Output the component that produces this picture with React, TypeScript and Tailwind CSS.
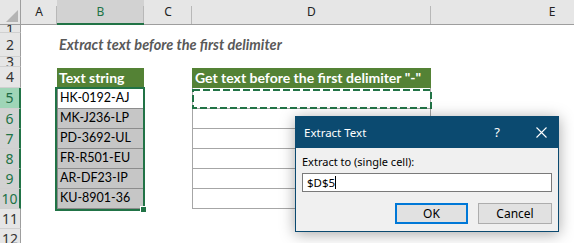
import React from 'react';

const cols = ['A', 'B', 'C', 'D', 'E'];
const rowNums = [1, 2, 3, 4, 5, 6, 7, 8, 9, 10, 11, 12];

const values: Record<number, string> = {
  5: 'HK-0192-AJ',
  6: 'MK-J236-LP',
  7: 'PD-3692-UL',
  8: 'FR-R501-EU',
  9: 'AR-DF23-IP',
  10: 'KU-8901-36',
};

const ColHeader = ({ label }: { label: string }) => {
  const selected = label === 'B';
  return (
    <div
      className={`relative flex items-center justify-center text-[12px] ${
        selected
          ? 'bg-[#d2d2d2] text-[#217346] border-b-2 border-[#217346]'
          : 'bg-[#e6e6e6] text-[#222] border-b border-[#9e9e9e]'
      }`}
    >
      {label}
      <div className="absolute right-0 top-[6px] bottom-0 w-px bg-[#b8b8b8]" />
    </div>
  );
};

const RowHeader = ({ n }: { n: number }) => {
  const active = n === 5;
  const sel = n >= 5 && n <= 10;
  return (
    <div
      className={`flex items-center justify-center overflow-hidden border-b border-[#d0d0d0] text-[14px] leading-none ${
        active
          ? 'bg-[#9fd5b7] text-[#1e6b45] border-r-2 border-r-[#217346]'
          : sel
          ? 'bg-[#d2d2d2] text-[#217346] border-r-2 border-r-[#217346]'
          : 'bg-[#e6e6e6] text-[#333] border-r border-r-[#9e9e9e]'
      }`}
    >
      {n}
    </div>
  );
};

function Row({ n }: { n: number }) {
  let b: React.ReactNode = <div />;
  let d: React.ReactNode = <div />;

  if (n === 2) {
    b = (
      <div className="flex items-center pl-[2px] whitespace-nowrap font-['Lato'] text-[14.5px] font-bold italic text-[#595959]">
        Extract text before the first delimiter
      </div>
    );
  }
  if (n === 4) {
    b = (
      <div className="flex items-center mt-[1px] pl-[2px] bg-[#548235] text-white font-['Lato'] font-bold text-[14px] leading-none whitespace-nowrap">
        Text string
      </div>
    );
    d = (
      <div className="flex items-center mt-[1px] pl-[3px] bg-[#548235] text-white font-['Lato'] font-bold text-[14px] leading-none whitespace-nowrap">
        Get text before the first delimiter "-"
      </div>
    );
  }
  if (values[n]) {
    b = (
      <div
        className={`flex items-center pl-[2px] border-b border-x border-[#8c8c8c] font-['Lato'] text-[12.5px] leading-none text-black whitespace-nowrap overflow-hidden ${
          n > 5 ? 'bg-[#c6c6c6]' : 'bg-white'
        }`}
      >
        {values[n]}
      </div>
    );
    d = <div className="border-b border-x border-[#a6a6a6] bg-white" />;
  }

  return (
    <>
      <RowHeader n={n} />
      <div />
      {b}
      <div />
      {d}
      <div />
    </>
  );
}

const Dialog = () => (
  <div className="absolute left-[295px] top-[116px] w-[264px] h-[116px] flex flex-col bg-[#f0f0f0] border border-[#0b4a70] shadow-[0_2px_14px_rgba(0,0,0,0.35)] font-['Noto_Sans'] text-[11px] text-black">
    <div className="h-[31px] flex items-center bg-[#0b4a70] text-white pl-[8px] pr-[10px]">
      <span className="text-[11.5px]">Extract Text</span>
      <span className="ml-auto text-[13px] w-[10px] text-center">?</span>
      <svg className="ml-[34px] mr-[1px]" width="11" height="11" viewBox="0 0 11 11">
        <path d="M0.5 0.5 L10.5 10.5 M10.5 0.5 L0.5 10.5" stroke="white" strokeWidth="1.1" />
      </svg>
    </div>
    <div className="flex flex-col px-[6px] pt-[6px]">
      <span className="leading-[16px]">Extract to (single cell):</span>
      <div className="mt-[3px] h-[19px] flex items-center bg-white border border-[#7a7a7a] pl-[4px] text-[11.5px]">
        <span>$D$5</span>
        <span className="w-px h-[13px] bg-black" />
      </div>
      <div className="mt-[11px] flex justify-end gap-[10px]">
        <button className="w-[73px] h-[21px] bg-[#e1e1e1] border-2 border-[#0078d7] text-[12px]">OK</button>
        <button className="w-[74px] h-[21px] bg-[#e1e1e1] border border-[#adadad] text-[12px]">Cancel</button>
      </div>
    </div>
  </div>
);

export default function App() {
  return (
    <div className="relative w-[574px] h-[243px] overflow-hidden bg-white font-['Noto_Sans']">
      <div className="grid w-[673px] grid-cols-[21px_36px_87px_48px_239px_242px] grid-rows-[25px_8px_24px_10px_21px_21px_20px_20px_20px_20px_20px_20px_20px]">
        <div className="relative overflow-hidden bg-[#e6e6e6] border-b border-r border-[#9e9e9e]">
          <svg className="absolute right-[2px] bottom-[2px]" width="12" height="12" viewBox="0 0 12 12">
            <polygon points="12,0 12,12 0,12" fill="#b4b4b4" />
          </svg>
        </div>
        {cols.map((c) => (
          <ColHeader key={c} label={c} />
        ))}
        {rowNums.map((n) => (
          <Row key={n} n={n} />
        ))}
      </div>

      {/* selection range B5:B10 */}
      <div className="absolute left-[55px] top-[87px] w-[90px] h-[124px] border-2 border-[#217346]" />
      <div className="absolute left-[140px] top-[206px] w-[7px] h-[7px] bg-[#217346] border border-white" />

      {/* copy marquee on D5 */}
      <svg className="absolute left-[192px] top-[89px]" width="240" height="20">
        <rect x="1" y="1" width="238" height="18" fill="none" stroke="#217346" strokeWidth="2" strokeDasharray="7 3" />
      </svg>

      <Dialog />
    </div>
  );
}
